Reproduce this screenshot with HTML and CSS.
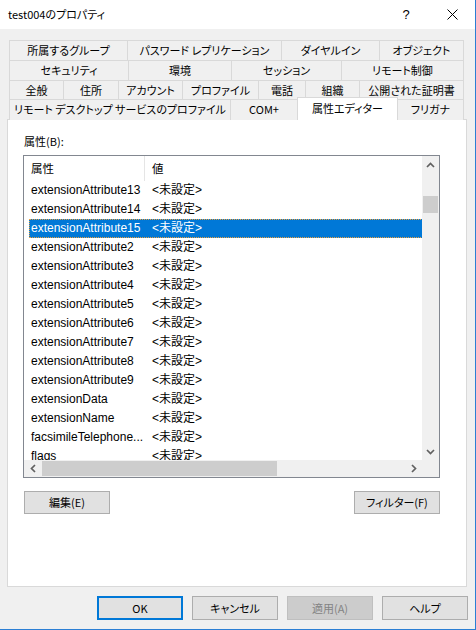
FILE: index.html
```html
<!DOCTYPE html>
<html lang="ja">
<head>
<meta charset="utf-8">
<title>test004のプロパティ</title>
<link rel="stylesheet" href="styles.css">
</head>
<body>
<div class="window">
  <div class="titlebar">
    <span class="title">test004のプロパティ</span>
    <span class="caption-btn help">?</span>
    <span class="caption-btn close">
      <svg width="11" height="11" viewBox="0 0 11 11"><path d="M0.5 0.5 L10.5 10.5 M10.5 0.5 L0.5 10.5" stroke="#000" stroke-width="1" fill="none"/></svg>
    </span>
  </div>

  <div class="tabs">
    <div class="tab-row row1">
      <div class="tab">所属するグループ</div>
      <div class="tab">パスワード レプリケーション</div>
      <div class="tab">ダイヤルイン</div>
      <div class="tab">オブジェクト</div>
    </div>
    <div class="tab-row row2">
      <div class="tab">セキュリティ</div>
      <div class="tab">環境</div>
      <div class="tab">セッション</div>
      <div class="tab">リモート制御</div>
    </div>
    <div class="tab-row row3">
      <div class="tab">全般</div>
      <div class="tab">住所</div>
      <div class="tab">アカウント</div>
      <div class="tab">プロファイル</div>
      <div class="tab">電話</div>
      <div class="tab">組織</div>
      <div class="tab">公開された証明書</div>
    </div>
    <div class="tab-row row4">
      <div class="tab">リモート デスクトップ サービスのプロファイル</div>
      <div class="tab">COM+</div>
      <div class="tab selected">属性エディター</div>
      <div class="tab">フリガナ</div>
    </div>
  </div>

  <div class="panel">
    <div class="label">属性(B):</div>
    <div class="listview">
      <div class="lv-viewport">
        <div class="lv-header">
          <div class="lv-hcell h1">属性</div>
          <div class="lv-hcell h2">値</div>
        </div>
        <div class="lv-row"><span class="c1">extensionAttribute13</span><span class="c2">&lt;未設定&gt;</span></div>
        <div class="lv-row"><span class="c1">extensionAttribute14</span><span class="c2">&lt;未設定&gt;</span></div>
        <div class="lv-row selected"><span class="c1">extensionAttribute15</span><span class="c2">&lt;未設定&gt;</span></div>
        <div class="lv-row"><span class="c1">extensionAttribute2</span><span class="c2">&lt;未設定&gt;</span></div>
        <div class="lv-row"><span class="c1">extensionAttribute3</span><span class="c2">&lt;未設定&gt;</span></div>
        <div class="lv-row"><span class="c1">extensionAttribute4</span><span class="c2">&lt;未設定&gt;</span></div>
        <div class="lv-row"><span class="c1">extensionAttribute5</span><span class="c2">&lt;未設定&gt;</span></div>
        <div class="lv-row"><span class="c1">extensionAttribute6</span><span class="c2">&lt;未設定&gt;</span></div>
        <div class="lv-row"><span class="c1">extensionAttribute7</span><span class="c2">&lt;未設定&gt;</span></div>
        <div class="lv-row"><span class="c1">extensionAttribute8</span><span class="c2">&lt;未設定&gt;</span></div>
        <div class="lv-row"><span class="c1">extensionAttribute9</span><span class="c2">&lt;未設定&gt;</span></div>
        <div class="lv-row"><span class="c1">extensionData</span><span class="c2">&lt;未設定&gt;</span></div>
        <div class="lv-row"><span class="c1">extensionName</span><span class="c2">&lt;未設定&gt;</span></div>
        <div class="lv-row"><span class="c1">facsimileTelephone...</span><span class="c2">&lt;未設定&gt;</span></div>
        <div class="lv-row"><span class="c1">flags</span><span class="c2">&lt;未設定&gt;</span></div>
      </div>
      <div class="vscroll">
        <div class="arrow">
          <svg width="9" height="6" viewBox="0 0 9 6"><polyline points="1,5 4.5,1.5 8,5" stroke="#606060" stroke-width="1.7" fill="none"/></svg>
        </div>
        <div class="vthumb"></div>
        <div class="arrow bottom">
          <svg width="9" height="6" viewBox="0 0 9 6"><polyline points="1,1 4.5,4.5 8,1" stroke="#606060" stroke-width="1.7" fill="none"/></svg>
        </div>
      </div>
      <div class="hscroll">
        <div class="arrow">
          <svg width="6" height="9" viewBox="0 0 6 9"><polyline points="5,1 1.5,4.5 5,8" stroke="#606060" stroke-width="1.7" fill="none"/></svg>
        </div>
        <div class="hthumb"></div>
        <div class="arrow right">
          <svg width="6" height="9" viewBox="0 0 6 9"><polyline points="1,1 4.5,4.5 1,8" stroke="#606060" stroke-width="1.7" fill="none"/></svg>
        </div>
      </div>
      <div class="corner"></div>
    </div>
    <div class="panel-actions">
      <div class="btn">編集(E)</div>
      <div class="btn">フィルター(F)</div>
    </div>
  </div>

  <div class="dialog-actions">
    <div class="btn default">OK</div>
    <div class="btn">キャンセル</div>
    <div class="btn disabled">適用(A)</div>
    <div class="btn">ヘルプ</div>
  </div>
</div>
</body>
</html>
```

FILE: styles.css
```css
* { box-sizing: border-box; }

html, body { margin: 0; padding: 0; }

body {
  width: 476px;
  height: 630px;
  overflow: hidden;
  background: #f0f0f0;
  font-family: "Noto Sans CJK JP", "Liberation Sans", sans-serif;
  font-size: 11px;
  font-feature-settings: "palt" 1;
  color: #000;
}

.window {
  width: 476px;
  height: 630px;
  background: #f0f0f0;
  border-right: 1px solid #2b7fd4;
  border-bottom: 1px solid #2b7fd4;
}

/* caption bar */
.titlebar {
  height: 29px;
  background: #fff;
  display: flex;
  align-items: center;
}
.title {
  flex: 1;
  padding-left: 8px;
  font-size: 11px;
  line-height: 29px;
}
.caption-btn {
  width: 46px;
  height: 29px;
  display: flex;
  align-items: center;
  justify-content: center;
}
.help {
  font-family: "Liberation Sans", sans-serif;
  font-size: 13px;
}

/* tab strip, four rows */
.tabs {
  margin: 11px 0 0 9px;
  width: 455px;
}
.tab-row {
  display: grid;
  height: 20px;
}
.row1 { grid-template-columns: 118px 154px 98px 85px; }
.row2 { grid-template-columns: 119px 103px 110px 123px; }
.row3 { grid-template-columns: 54px 55px 64px 76px 47px 54px 105px; height: 19px; }
.row4 {
  grid-template-columns: 221px 67px 101px 66px;
  position: relative;
  z-index: 1;
}
.tab {
  border-top: 1px solid #d9d9d9;
  border-left: 1px solid #d9d9d9;
  background: #f0f0f0;
  text-align: center;
  line-height: 18px;
  white-space: nowrap;
  overflow: hidden;
}
.tab:last-child { border-right: 1px solid #d9d9d9; }
.tab.selected {
  background: #fff;
  margin-top: -2px;
  height: 23px;
  border-right: 1px solid #d9d9d9;
  line-height: 20px;
}
.tab.selected + .tab { border-left: none; }

/* tab page */
.panel {
  margin-left: 7px;
  width: 460px;
  height: 468px;
  background: #fff;
  border: 1px solid #d9d9d9;
  padding: 13px 0 0 15px;
}
.label {
  line-height: 16px;
  padding-left: 1px;
}

.listview {
  margin-top: 6px;
  width: 417px;
  height: 323px;
  border: 1px solid #828790;
  display: grid;
  grid-template-columns: 398px 17px;
  grid-template-rows: 304px 17px;
  font-family: "Liberation Sans", "Noto Sans CJK JP", sans-serif;
  font-size: 12px;
}
.lv-viewport {
  overflow: hidden;
  background: #fff;
}
.lv-header {
  display: flex;
  height: 25px;
  width: 600px;
}
.lv-hcell {
  line-height: 25px;
  padding-left: 7px;
  font-family: "Noto Sans CJK JP", sans-serif;
  font-size: 11.5px;
}
.h1 {
  width: 121px;
  border-right: 1px solid #e5e5e5;
}
.lv-row {
  display: flex;
  height: 19px;
  line-height: 19px;
  margin-left: 5px;
  width: 600px;
  white-space: nowrap;
}
.c1 {
  width: 116px;
  padding-left: 2px;
  overflow: hidden;
}
.c2 { padding-left: 7px; }
.lv-row.selected {
  background: #0078d7;
  color: #fff;
  outline: 1px dotted #e9a040;
  outline-offset: -1px;
}

/* scroll bars */
.vscroll {
  background: #f0f0f0;
  display: flex;
  flex-direction: column;
}
.hscroll {
  background: #f0f0f0;
  display: flex;
}
.arrow {
  width: 17px;
  height: 17px;
  display: flex;
  align-items: center;
  justify-content: center;
  flex: none;
}
.arrow.bottom, .arrow.right { margin-left: auto; margin-top: auto; }
.hscroll .arrow.right { margin-top: 0; }
.vscroll .arrow.bottom { margin-left: 0; }
.vthumb {
  margin: 23px 1px 0;
  height: 17px;
  background: #cdcdcd;
}
.hthumb {
  margin: 1px 0 1px 1px;
  width: 235px;
  background: #cdcdcd;
}
.corner { background: #f0f0f0; }

/* buttons */
.btn {
  width: 86px;
  height: 23px;
  background: #e1e1e1;
  border: 1px solid #adadad;
  text-align: center;
  line-height: 21px;
  white-space: nowrap;
}
.panel-actions {
  margin: 13px 0 0 1px;
  width: 416px;
  display: flex;
  justify-content: space-between;
}
.dialog-actions {
  margin-top: 9px;
  padding-right: 7px;
  display: flex;
  justify-content: flex-end;
  gap: 9px;
}
.dialog-actions .btn {
  height: 24px;
  line-height: 22px;
}
.btn.default {
  border: 2px solid #0078d7;
  line-height: 20px;
}
.dialog-actions .btn.default { line-height: 20px; }
.btn.disabled {
  background: #cccccc;
  border-color: #bfbfbf;
  color: #838383;
}
```
